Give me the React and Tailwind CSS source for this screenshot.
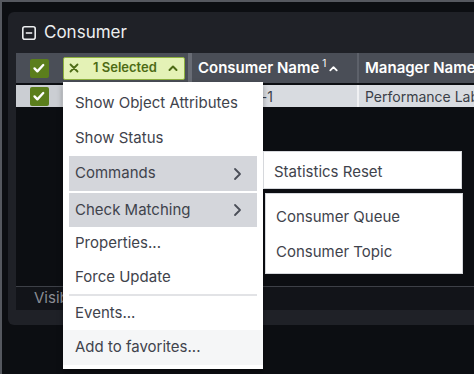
import React from 'react';

const Check = ({ className = '' }) => (
  <svg viewBox="0 0 20 20" className={className} fill="none" stroke="#fff" strokeWidth="2.6" strokeLinecap="round" strokeLinejoin="round">
    <path d="M5 10.5l3.2 3.2 6.5-7" />
  </svg>
);

const CheckBox = () => (
  <div className="w-[19px] h-[19px] rounded-[2px] bg-[#5b7e1c] flex items-center justify-center">
    <Check className="w-[18px] h-[18px]" />
  </div>
);

const ChevronRight = () => (
  <svg viewBox="0 0 16 16" className="w-[16px] h-[16px]" fill="none" stroke="#4a4e57" strokeWidth="1.8" strokeLinecap="round" strokeLinejoin="round">
    <path d="M6 3l5 5-5 5" />
  </svg>
);

const ChevronUp = ({ color, className = '' }) => (
  <svg viewBox="0 0 12 12" className={className} fill="none" stroke={color} strokeWidth="2" strokeLinecap="round" strokeLinejoin="round">
    <path d="M2.5 8l3.5-3.5 3.5 3.5" />
  </svg>
);

const MenuItem = ({ label, sub, active, faint, h = 'h-[35px]' }) => (
  <div className={`px-[6px] ${h} ${faint ? 'bg-[#f5f6f7]' : ''}`}>
    <div
      className={`h-full flex items-center justify-between pl-[6px] pr-[12px] text-[15px] text-[#3f434c] ${
        active ? 'bg-[#d4d6db]' : ''
      }`}
    >
      <span>{label}</span>
      {sub && <ChevronRight />}
    </div>
  </div>
);

export default function App() {
  return (
    <div className="relative w-[474px] h-[374px] overflow-hidden bg-[#0c0e12] border-t-2 border-l-2 border-[#55585f] font-['Inter',sans-serif]">
      <div className="pt-[10px] pl-[6px]">
        <div className="w-[520px] rounded-md bg-[#1f2127] pl-[8px] pb-[15px]">
          {/* title */}
          <div className="h-[41px] flex items-center gap-[8px] pl-[6px] text-[#eceef0]">
            <svg viewBox="0 0 14 14" className="w-[14px] h-[14px]" fill="none" stroke="#eceef0" strokeWidth="1.6">
              <rect x="0.8" y="0.8" width="12.4" height="12.4" rx="2" />
              <path d="M3.8 7h6.4" />
            </svg>
            <span className="text-[17px]">Consumer</span>
          </div>

          {/* table */}
          <div className="bg-[#0c0e12]">
            <div className="h-[30px] flex items-center bg-[#4a4e57]">
              <div className="w-[46px] h-full flex items-center justify-center">
                <CheckBox />
              </div>
              <div className="w-[126px] h-full flex items-center pl-[1px]">
                <div className="w-[122px] h-[23px] rounded-[2px] border border-[#8db13d] bg-[#e4f2b6] flex items-center pl-[5px] pr-[5px] text-[#4d6b15] font-semibold text-[13px]">
                  <svg viewBox="0 0 10 10" className="w-[10px] h-[10px]" fill="none" stroke="#4d6b15" strokeWidth="1.8" strokeLinecap="round">
                    <path d="M1.5 1.5l7 7M8.5 1.5l-7 7" />
                  </svg>
                  <span className="ml-[14px]">1 Selected</span>
                  <ChevronUp color="#4d6b15" className="ml-auto w-[12px] h-[12px]" />
                </div>
              </div>
              <div className="w-[4px] h-full bg-[#686c75]" />
              <div className="w-[165px] h-full flex items-center pl-[6px] text-white font-semibold text-[15px]">
                Consumer Name
                <sup className="text-[10px] ml-[3px] font-normal">1</sup>
                <ChevronUp color="#fff" className="ml-[2px] w-[11px] h-[11px]" />
              </div>
              <div className="w-[2px] h-full bg-[#5d616a]" />
              <div className="pl-[6px] text-white font-semibold text-[15px] whitespace-nowrap">Manager Name</div>
            </div>
            <div className="h-[2px]" />
            <div className="h-[22px] flex items-center bg-[#d8dbe0] text-[14px] text-[#3b3f48]">
              <div className="w-[46px] h-full flex items-center justify-center bg-[#cbced3]">
                <CheckBox />
              </div>
              <div className="w-[130px]" />
              <div className="w-[165px] pl-[1px]">Consumer-1</div>
              <div className="w-[2px] h-full bg-[#f0f1f3]" />
              <div className="pl-[6px] whitespace-nowrap">Performance Lab</div>
            </div>
            <div className="h-[179px]" />
            <div className="h-[24px] border-t border-[#3d4047] bg-[#121419] flex items-center pl-[18px] text-[15px] text-[#8a8d94]">
              Visible
            </div>
          </div>
        </div>
      </div>

      {/* context menu */}
      <div className="absolute left-[61px] top-[80px] w-[200px] h-[287px] bg-white pt-[4px] shadow-[0_3px_6px_rgba(0,0,0,0.35)]">
        <MenuItem label="Show Object Attributes" />
        <MenuItem label="Show Status" />
        <MenuItem label="Commands" sub active />
        <div className="h-[2px]" />
        <MenuItem label="Check Matching" sub active h="h-[34px]" />
        <MenuItem label="Properties..." h="h-[33px]" />
        <MenuItem label="Force Update" h="h-[34px]" />
        <div className="mx-[6px] h-[2px] bg-[#e2e3e6]" />
        <MenuItem label="Events..." h="h-[34px]" />
        <MenuItem label="Add to favorites..." faint />
      </div>

      {/* submenus */}
      <div className="absolute left-[261px] top-[149px] w-[199px] h-[38px] bg-white border border-[#d6d8dc] flex items-center pl-[10px] pt-[5px] text-[15px] text-[#3f434c]">
        Statistics Reset
      </div>
      <div className="absolute left-[263px] top-[191px] w-[198px] h-[81px] bg-white border border-[#d6d8dc] pt-[6px] text-[15px] text-[#3f434c]">
        <div className="h-[35px] flex items-center pl-[10px]">Consumer Queue</div>
        <div className="h-[35px] flex items-center pl-[10px]">Consumer Topic</div>
      </div>
    </div>
  );
}
